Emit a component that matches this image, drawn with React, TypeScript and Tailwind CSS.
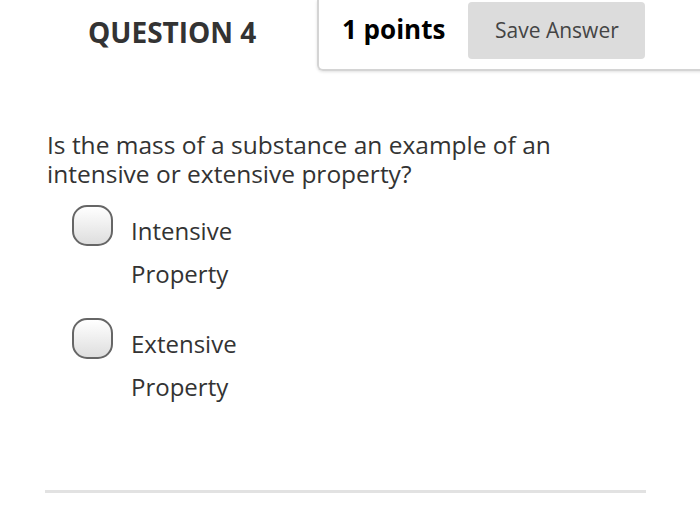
import React from "react";

const options = ["Intensive Property", "Extensive Property"];

function Radio() {
  return (
    <span className="-mt-[4px] h-[41px] w-[41px] shrink-0 rounded-[15px] border-2 border-[#666] bg-gradient-to-b from-white to-[#dedede]" />
  );
}

export default function App() {
  return (
    <div className="h-[514px] w-[700px] overflow-hidden bg-white font-['Open_Sans',sans-serif] text-[#333]">
      <div className="flex items-start">
        <div className="w-[317px] shrink-0 pl-[88px] pt-[18px]">
          <h2 className="text-[28px] font-bold leading-none text-[#333]">QUESTION 4</h2>
        </div>
        <div className="flex h-[71px] flex-1 items-start rounded-bl-[6px] border-b-2 border-l-2 border-[#d4d4d4] pl-[23px] pt-[2px] shadow-[0_1px_3px_rgba(0,0,0,0.12)] -mr-[10px]">
          <p className="mt-[14px] text-[26px] font-bold leading-none text-black">1 points</p>
          <button className="ml-[23px] flex h-[57px] w-[177px] items-center justify-center rounded-[4px] bg-[#dcdcdc] text-[21px] text-[#444]">
            Save Answer
          </button>
        </div>
      </div>

      <div className="px-[47px] pt-[59px]">
        <p className="text-[24.5px] leading-[29px]">
          Is the mass of a substance an example of an
          <br />
          intensive or extensive property?
        </p>

        <div className="mt-[21px] flex flex-col gap-[27px] pl-[25px]">
          {options.map((o) => (
            <label key={o} className="flex items-start gap-[18px]">
              <Radio />
              <span className="w-[120px] text-[24px] leading-[43px]">{o}</span>
            </label>
          ))}
        </div>

        <div className="mt-[82px] h-[3px] w-[601px] -ml-[2px] bg-[#e2e2e2]" />
      </div>
    </div>
  );
}
